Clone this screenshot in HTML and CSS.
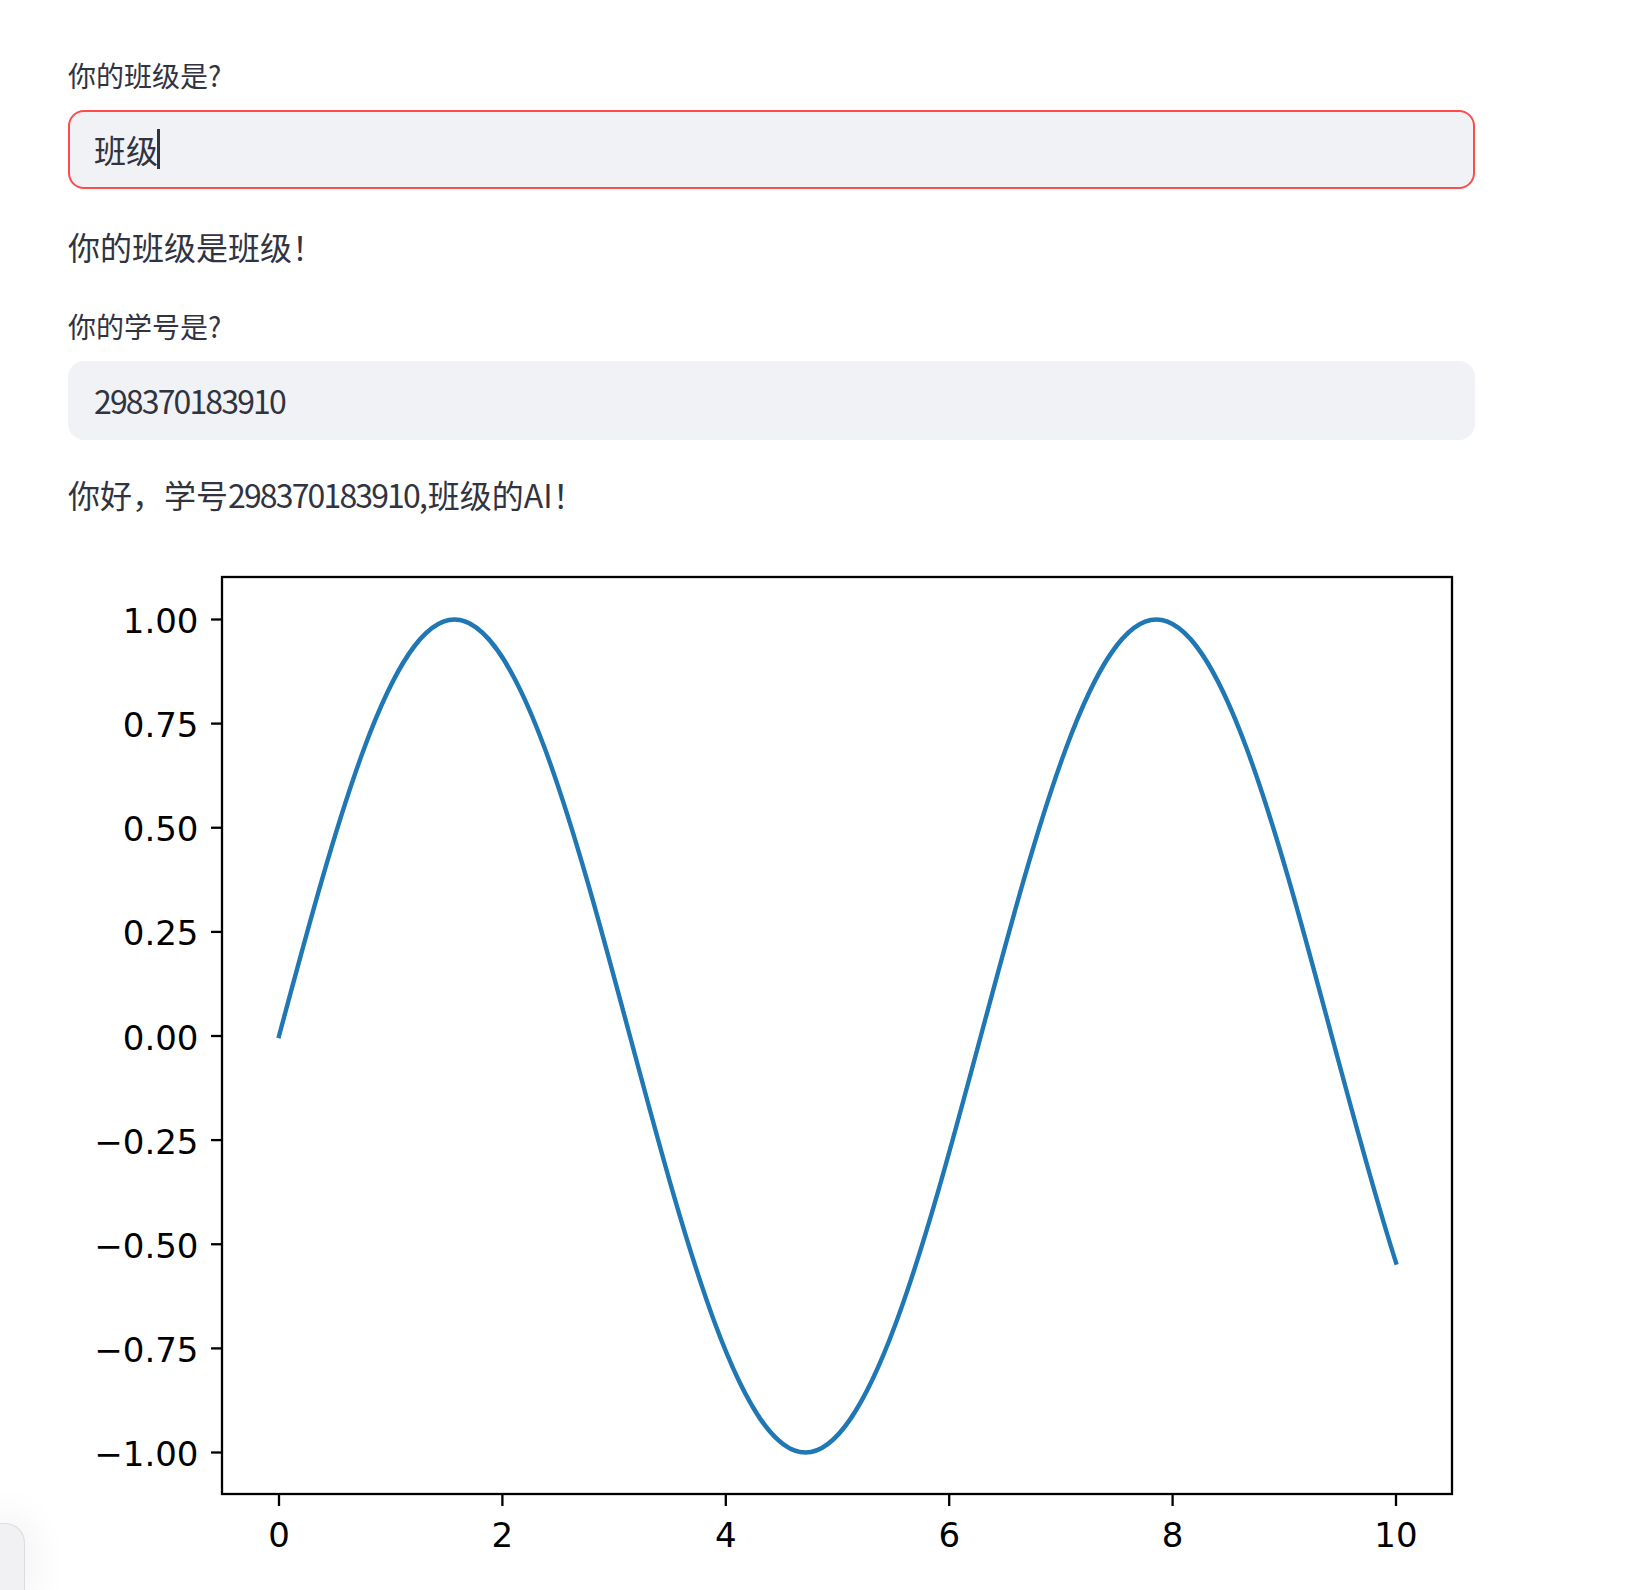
FILE: index.html
```html
<!DOCTYPE html>
<html lang="zh-CN">
<head>
<meta charset="utf-8">
<title>班级</title>
<link rel="stylesheet" href="styles.css">
</head>
<body>
<main class="main">
  <label class="label">你的班级是?</label>
  <div class="input focused"><span class="value">班级</span><span class="caret"></span></div>
  <p class="text">你的班级是班级！</p>
  <label class="label">你的学号是?</label>
  <div class="input"><span class="value num">298370183910</span></div>
  <p class="text last">你好，学号<span class="num">298370183910</span>,班级的AI！</p>
  <svg class="plot" width="1407" height="1050" viewBox="68 540 1407 1050" xmlns="http://www.w3.org/2000/svg">
    <path d="M279,1036 C336.22,822.63 390.96,619.5 454.46,619.5 C517.96,619.5 572.70,822.63 629.92,1036 C687.14,1249.37 741.88,1452.5 805.38,1452.5 C868.88,1452.5 923.61,1249.37 980.83,1036 C1038.05,822.63 1092.79,619.5 1156.29,619.5 C1219.79,619.5 1274.53,822.63 1331.75,1036 C1353.16,1115.84 1374.59,1195.56 1396,1262.58" fill="none" stroke="#1f77b4" stroke-width="4.4" stroke-linecap="square" stroke-linejoin="round"/>
    <rect x="222" y="577" width="1230" height="917" fill="none" stroke="#000" stroke-width="2.3"/>
    <g stroke="#000" stroke-width="2.3">
      <line x1="211" y1="619.5" x2="222" y2="619.5"/>
      <line x1="211" y1="723.6" x2="222" y2="723.6"/>
      <line x1="211" y1="827.75" x2="222" y2="827.75"/>
      <line x1="211" y1="931.9" x2="222" y2="931.9"/>
      <line x1="211" y1="1036" x2="222" y2="1036"/>
      <line x1="211" y1="1140.1" x2="222" y2="1140.1"/>
      <line x1="211" y1="1244.25" x2="222" y2="1244.25"/>
      <line x1="211" y1="1348.4" x2="222" y2="1348.4"/>
      <line x1="211" y1="1452.5" x2="222" y2="1452.5"/>
      <line x1="279" y1="1494" x2="279" y2="1506"/>
      <line x1="502.4" y1="1494" x2="502.4" y2="1506"/>
      <line x1="725.8" y1="1494" x2="725.8" y2="1506"/>
      <line x1="949.2" y1="1494" x2="949.2" y2="1506"/>
      <line x1="1172.6" y1="1494" x2="1172.6" y2="1506"/>
      <line x1="1396" y1="1494" x2="1396" y2="1506"/>
    </g>
    <g class="ticks-y" text-anchor="end">
      <text x="198.5" y="633">1.00</text>
      <text x="198.5" y="737.1">0.75</text>
      <text x="198.5" y="841.25">0.50</text>
      <text x="198.5" y="945.4">0.25</text>
      <text x="198.5" y="1049.5">0.00</text>
      <text x="198.5" y="1153.6">−0.25</text>
      <text x="198.5" y="1257.75">−0.50</text>
      <text x="198.5" y="1361.9">−0.75</text>
      <text x="198.5" y="1466">−1.00</text>
    </g>
    <g class="ticks-x" text-anchor="middle">
      <text x="279" y="1547">0</text>
      <text x="502.4" y="1547">2</text>
      <text x="725.8" y="1547">4</text>
      <text x="949.2" y="1547">6</text>
      <text x="1172.6" y="1547">8</text>
      <text x="1396" y="1547">10</text>
    </g>
  </svg>
</main>
<div class="corner"></div>
</body>
</html>
```
FILE: styles.css
```css
html, body {
  margin: 0;
  padding: 0;
  height: 1590px;
  overflow: hidden;
  background: #ffffff;
}
body {
  font-family: "Noto Sans CJK SC", "Noto Sans", sans-serif;
  color: rgb(49, 51, 63);
  position: relative;
}
.main {
  display: flex;
  flex-direction: column;
  align-items: flex-start;
  padding: 55px 0 0 68px;
  width: 1407px;
}
.label {
  display: block;
  font-size: 28px;
  line-height: 40px;
  height: 40px;
}
.input {
  box-sizing: border-box;
  width: 1407px;
  height: 79px;
  margin-top: 15px;
  background: rgb(240, 242, 246);
  border: 2px solid rgb(240, 242, 246);
  border-radius: 16px;
  padding: 0 0 2px 24px;
  display: flex;
  align-items: center;
  font-size: 32px;
}
.input.focused {
  border-color: rgb(255, 75, 75);
}
.value {
  line-height: 40px;
}
.num {
  letter-spacing: -1.85px;
}
.caret {
  display: inline-block;
  width: 3px;
  height: 40px;
  background: rgb(49, 51, 63);
  margin-left: -1px;
}
.text {
  margin: 33px 0 0 0;
  font-size: 32px;
  line-height: 48px;
  height: 48px;
}
.text.last {
  margin-top: 30px;
}
.label + .input {
  margin-top: 15px;
}
.text + .label {
  margin-top: 36px;
}
.plot {
  display: block;
  margin-top: 22px;
  flex: none;
}
.ticks-y text, .ticks-x text {
  font-family: "DejaVu Sans", sans-serif;
  font-size: 34px;
  fill: #000;
}
.corner {
  position: absolute;
  left: 0;
  top: 1523px;
  width: 24px;
  height: 67px;
  background: #f1f1f3;
  border: 1px solid #dcdcdf;
  border-left: none;
  border-bottom: none;
  border-top-right-radius: 20px;
  box-shadow: 0 0 36px 10px rgba(0, 0, 0, 0.05);
}
```
